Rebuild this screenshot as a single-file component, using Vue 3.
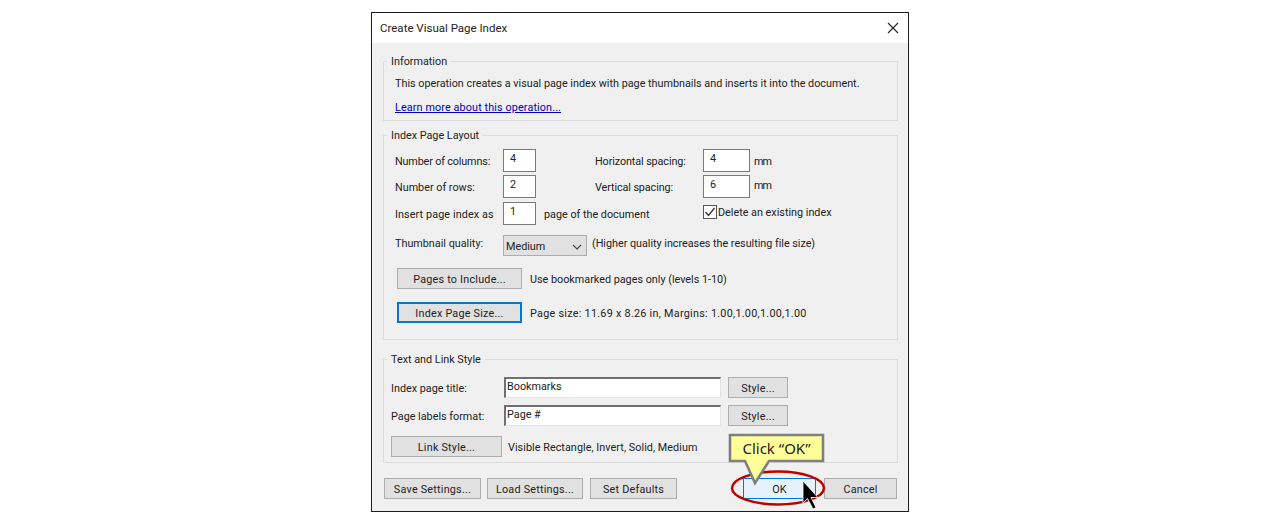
<script setup>
const bottomLeft = [
  { label: 'Save Settings...', cls: 'b-save' },
  { label: 'Load Settings...', cls: 'b-load' },
  { label: 'Set Defaults', cls: 'b-def' },
]
</script>

<template>
  <div class="page">
    <div class="dialog">
      <div class="titlebar">
        <span class="title">Create Visual Page Index</span>
        <svg class="close" width="12" height="12" viewBox="0 0 12 12">
          <path d="M1 1L11 11M11 1L1 11" stroke="#222" stroke-width="1.1" fill="none" />
        </svg>
      </div>
      <div class="body">
        <fieldset class="group g-info">
          <legend>Information</legend>
          <div class="line">This operation creates a visual page index with page thumbnails and inserts it into the document.</div>
          <a class="line link">Learn more about this operation...</a>
        </fieldset>

        <fieldset class="group g-layout">
          <legend>Index Page Layout</legend>
          <div class="row r1">
            <span class="lbl">Number of columns:</span>
            <input class="num" readonly value="4" />
            <span class="lbl2">Horizontal spacing:</span>
            <input class="num wide" readonly value="4" />
            <span class="unit">mm</span>
          </div>
          <div class="row r2">
            <span class="lbl">Number of rows:</span>
            <input class="num" readonly value="2" />
            <span class="lbl2">Vertical spacing:</span>
            <input class="num wide" readonly value="6" />
            <span class="unit">mm</span>
          </div>
          <div class="row r3">
            <span class="lbl">Insert page index as</span>
            <input class="num" readonly value="1" />
            <span class="after">page of the document</span>
            <span class="check">
              <svg width="14" height="14" viewBox="0 0 14 14">
                <rect x="0.5" y="0.5" width="13" height="13" fill="#fff" stroke="#555" />
                <path d="M2.5 7L5.5 10.5L11.5 3" stroke="#333" stroke-width="1.3" fill="none" />
              </svg>
              <span class="check-text">Delete an existing index</span>
            </span>
          </div>
          <div class="row r4">
            <span class="lbl">Thumbnail quality:</span>
            <div class="combo">
              <span>Medium</span>
              <svg width="10" height="6" viewBox="0 0 10 6">
                <path d="M1 1L5 5L9 1" stroke="#444" stroke-width="1.1" fill="none" />
              </svg>
            </div>
            <span class="hint">(Higher quality increases the resulting file size)</span>
          </div>
          <div class="row r5">
            <button class="btn b-wide">Pages to Include...</button>
            <span class="note">Use bookmarked pages only (levels 1-10)</span>
          </div>
          <div class="row r6">
            <button class="btn b-wide focus">Index Page Size...</button>
            <span class="note">Page size: 11.69 x 8.26 in, Margins: 1.00,1.00,1.00,1.00</span>
          </div>
        </fieldset>

        <fieldset class="group g-text">
          <legend>Text and Link Style</legend>
          <div class="row t1">
            <span class="tlbl">Index page title:</span>
            <input class="field" readonly value="Bookmarks" />
            <button class="btn b-style">Style...</button>
          </div>
          <div class="row t2">
            <span class="tlbl">Page labels format:</span>
            <input class="field" readonly value="Page #" />
            <button class="btn b-style">Style...</button>
          </div>
          <div class="row t3">
            <button class="btn b-link">Link Style...</button>
            <span class="lnote">Visible Rectangle, Invert, Solid, Medium</span>
          </div>
        </fieldset>

        <div class="actions">
          <button v-for="b in bottomLeft" :key="b.label" class="btn" :class="b.cls">{{ b.label }}</button>
          <button class="btn b-ok">OK</button>
          <button class="btn b-cancel">Cancel</button>
        </div>
      </div>

      <div class="overlay">
        <svg width="110" height="80" viewBox="0 0 110 80">
          <ellipse cx="50" cy="55" rx="46" ry="16.5" fill="none" stroke="#c00000" stroke-width="2.5" />
          <path d="M2 2H95V28H41L27 50L17 28H2Z" fill="#ffff99" stroke="#808080" stroke-width="2.6" stroke-linejoin="miter" />
          <path d="M75 48L75 70L79.5 65.5L85 76L88 74.5L83 64.5L90 64.5Z" fill="#000" stroke="#fff" stroke-width="0.8" />
        </svg>
        <span class="tip">Click “OK”</span>
      </div>
    </div>
  </div>
</template>

<style scoped>
.page {
  display: flex;
  justify-content: center;
  padding-top: 12px;
  height: 509px;
  background: #fff;
}
.dialog {
  position: relative;
  width: 536px;
  height: 498px;
  border: 1px solid #1c1c1c;
  background: #f0f0f0;
  font-family: Roboto, sans-serif;
  font-size: 10.8px;
  color: #222;
}
.titlebar {
  display: flex;
  align-items: center;
  justify-content: space-between;
  height: 30px;
  padding: 0 9px 0 8px;
  background: #fff;
}
.title {
  font-size: 11.5px;
}
.body {
  padding: 10px 10px 0 11px;
}
.group {
  box-sizing: border-box;
  margin: 0;
  min-width: 0;
  padding: 0 0 0 11px;
  border: 1px solid #dcdcdc;
}
.group legend {
  box-sizing: border-box;
  height: 16px;
  line-height: 14px;
  margin-left: -8px;
  padding: 2px 4px 0;
}
.g-info {
  height: 68px;
  margin-bottom: 6px;
}
.line {
  display: block;
  box-sizing: border-box;
  height: 16px;
  line-height: 15px;
  padding-top: 1px;
  margin-top: 6px;
}
.line.link {
  margin-top: 8px;
  width: max-content;
  color: #0000bb;
  text-decoration: underline;
  letter-spacing: 0.12px;
}
.g-layout {
  height: 213px;
  margin-bottom: 11px;
}
.g-text {
  height: 112px;
  padding-left: 7px;
}
.g-text legend {
  margin-left: -4px;
}
.row {
  display: flex;
  align-items: center;
}
.r1 { margin-top: 6px; }
.r2 { margin-top: 3px; }
.r3 { margin-top: 4px; }
.r4 { margin-top: 10px; height: 21px; }
.r5 { margin-top: 12px; margin-left: 2px; }
.r6 { margin-top: 13px; margin-left: 2px; }
.lbl { box-sizing: border-box; width: 108px; padding-top: 2px; white-space: nowrap; }
.r1 .lbl { letter-spacing: -0.15px; }
.r3 .lbl { letter-spacing: 0.1px; }
.r4 .lbl, .hint { padding: 0 0 4px; }
.lbl2 { width: 108px; margin-left: 59px; padding-top: 2px; letter-spacing: -0.1px; }
.num {
  box-sizing: border-box;
  width: 33px;
  height: 23px;
  padding: 0 0 4px 6px;
  border: 1px solid #7a7a7a;
  background: #fff;
  font: inherit;
  color: inherit;
  outline: none;
}
.num.wide { width: 47px; }
.unit { margin-left: 4px; letter-spacing: -1px; }
.r1 .unit { padding-top: 2px; }
.r2 .unit { padding-bottom: 2px; }
.after { width: 159px; margin-left: 8px; padding-top: 2px; }
.check {
  display: flex;
  align-items: center;
  gap: 1px;
  margin-top: -4px;
}
.check svg { flex: none; }
.check-text { padding-top: 2px; }
.combo {
  box-sizing: border-box;
  display: flex;
  align-items: center;
  justify-content: space-between;
  width: 84px;
  height: 21px;
  padding: 2px 4px 0 2px;
  border: 1px solid #adadad;
  background: #e1e1e1;
}
.hint { margin-left: 5px; letter-spacing: -0.02px; }
.btn {
  box-sizing: border-box;
  height: 21px;
  padding: 1px 0 0;
  border: 1px solid #adadad;
  background: #e1e1e1;
  font: inherit;
  letter-spacing: 0.22px;
  color: inherit;
}
.b-wide { width: 125px; }
.focus { border: 2px solid #0078d7; }
.note { margin-left: 8px; padding-top: 2px; }
.r6 .note { letter-spacing: 0.27px; }
.tlbl { width: 113px; padding-top: 2px; }
.field {
  box-sizing: border-box;
  width: 217px;
  height: 21px;
  padding: 0 0 4px 1px;
  border-style: solid;
  border-width: 2px 1px 1px 2px;
  border-color: #707070 #e4e4e4 #e4e4e4 #707070;
  background: #fff;
  font: inherit;
  color: inherit;
  outline: none;
}
.b-style { width: 60px; margin-left: 7px; }
.t1 { margin-top: 10px; }
.t2 { margin-top: 7px; }
.t3 { margin-top: 10px; }
.b-link { width: 111px; }
.lnote { margin-left: 6px; padding-top: 2px; letter-spacing: 0.05px; }
.actions {
  display: flex;
  margin: 15px 0 0 1px;
}
.b-save { width: 97px; margin-right: 6px; }
.b-load { width: 96px; margin-right: 7px; }
.b-def { width: 87px; margin-right: 66px; }
.b-ok {
  width: 73px;
  margin-right: 8px;
  border-color: #0078d7;
  background: #e5f1fb;
}
.b-cancel { width: 73px; }
.overlay {
  position: absolute;
  left: 356px;
  top: 420px;
  width: 110px;
  height: 80px;
}
.overlay svg { display: block; }
.tip {
  position: absolute;
  left: 0;
  top: 2px;
  width: 97px;
  height: 26px;
  line-height: 26px;
  text-align: center;
  font-family: "Noto Sans", sans-serif;
  font-size: 15px;
  color: #222;
}
.close { display: block; }
</style>
